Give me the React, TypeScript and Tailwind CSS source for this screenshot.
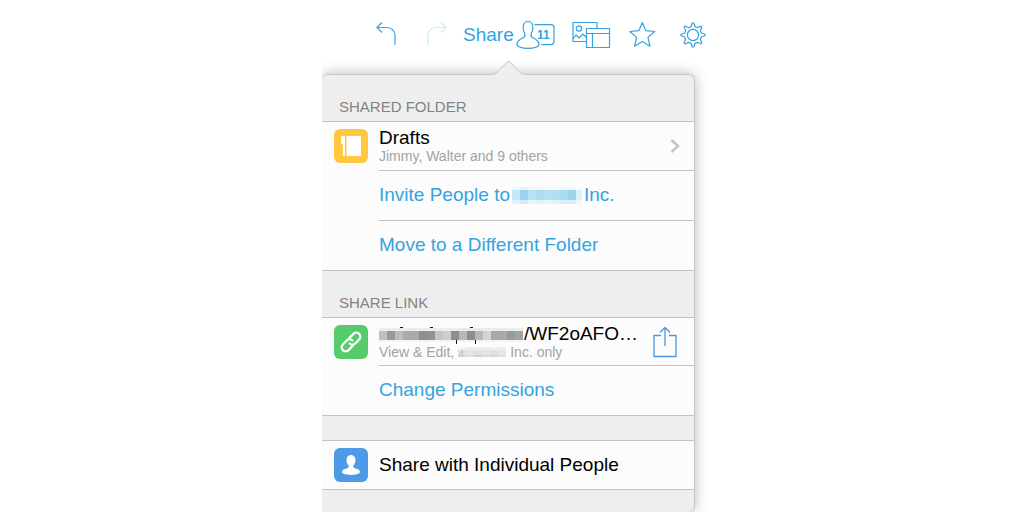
import type { ReactNode } from 'react';

type MosaicRow = { y: number; height: number; colors: string[] };

const inviteMosaic: MosaicRow[] = [
  { y: 0, height: 3, colors: ['#eef7fb', '#e6f4fb', '#f1f9fc', '#f1f9fc', '#f3fafd', '#f1f9fc', '#eef7fb', '#eaf6fb', '#f8fbfc'] },
  { y: 3, height: 10, colors: ['#c6e6f5', '#9ad3ee', '#b9e0f3', '#addcf1', '#b7e0f3', '#b4dff2', '#a9daf1', '#9ad3ee', '#dcf0f9'] },
  { y: 13, height: 4, colors: ['#e1f2fa', '#d3ecf8', '#e6f4fb', '#e4f3fa', '#e6f4fb', '#e1f2fa', '#d8eef8', '#d8eef8', '#eef7fb'] },
];

const linkMosaic: MosaicRow[] = [
  { y: 4, height: 3, colors: Array(18).fill('#ececec') },
  {
    y: 7,
    height: 9,
    colors: [
      '#c0c0c0', '#999999', '#bdbdbd', '#a9a9a9', '#a9a9a9', '#8e8e8e', '#929292', '#c4c4c4', '#cecece',
      '#8e8e8e', '#b8b8b8', '#8e8e8e', '#b8b8b8', '#d4d4d4', '#a7a7a7', '#a9a9a9', '#999999', '#a2a2a2',
    ],
  },
  { y: 16, height: 2, colors: Array(18).fill('#f4f4f4') },
];

const permissionMosaic: MosaicRow[] = [
  { y: 1, height: 3, colors: ['#f4f4f4', '#ededed', '#efefef', '#ebebeb', '#f0f0f0', '#ededed'] },
  { y: 4, height: 5, colors: ['#e2e2e2', '#e4e4e4', '#e0e0e0', '#e4e4e4', '#e0e0e0', '#e6e6e6'] },
  { y: 9, height: 2, colors: ['#d6d6d6', '#dedede', '#d2d2d2', '#dcdcdc', '#d6d6d6', '#dedede'] },
];

function Mosaic({ rows, width, height, children }: {
  rows: MosaicRow[];
  width: number;
  height: number;
  children?: ReactNode;
}) {
  return (
    <svg aria-hidden="true" className="shrink-0" width={width} height={height} shapeRendering="crispEdges">
      {rows.map(row =>
        row.colors.map((color, i) => (
          <rect key={`${row.y}-${i}`} x={i * 8} y={row.y} width="8" height={row.height} fill={color} />
        ))
      )}
      {children}
    </svg>
  );
}

function Toolbar() {
  return (
    <header className="flex h-[74px] items-start pt-[18px] pl-[53px] text-[#34a3e0]">
      <button aria-label="Undo" className="mr-[30px]">
        <svg width="22" height="34" viewBox="0 0 22 34" fill="none" stroke="currentColor" strokeWidth="1.2">
          <path d="M7 4.5 2 9.5l5 5M2 9.5h10a8 8 0 0 1 8 8V27" />
        </svg>
      </button>
      <button aria-label="Redo" disabled className="mr-[14px] text-[#cbe8f8]">
        <svg width="22" height="34" viewBox="0 0 22 34" fill="none" stroke="currentColor" strokeWidth="1.2">
          <path d="m14 4.5 5 5-5 5M19 9.5H9a8 8 0 0 0-8 8V27" />
        </svg>
      </button>
      <button className="flex h-[34px] items-center gap-[2px] text-[19px]">
        Share
        <svg width="40" height="34" viewBox="0 0 40 34" fill="none" stroke="currentColor" strokeWidth="1.2">
          <path d="M8.5 15C7 12.5 7 10.5 7.2 8.5 7.5 5.500 9.500 3.500 12 3.500s4.500 2 4.800 5c.2 2 .2 4-1.300 6.500-.7 1.500-.7 3.200.5 4.200 2.300 1.600 7 2.600 7 7.300 0 2-4.500 3.900-11 3.900S1 28.500 1 26.500c0-4.700 4.700-5.700 7-7.300 1.200-1 1.200-2.700.5-4.200z" />
          <path d="M18.500 6.600H35a3 3 0 0 1 3 3v14a3 3 0 0 1-3 3H25.500" />
          <text x="21" y="21" fontSize="12" fontWeight="bold" fill="currentColor" stroke="none">11</text>
        </svg>
      </button>
      <button aria-label="Insert" className="mr-[17px] ml-[16px]">
        <svg width="40" height="34" viewBox="0 0 40 34" fill="none" stroke="currentColor" strokeWidth="1.2">
          <path d="M14 23.500H1V4.500h24v6M14.500 10.500h23v19h-23zM14.500 15.500h23M20.500 15.500v14" />
          <circle cx="7" cy="10.500" r="2.700" />
          <path d="m1 21 3-4 3 3 4-4 3 3" />
        </svg>
      </button>
      <button aria-label="Favorite" className="mr-[24px]">
        <svg width="27" height="34" viewBox="0 0 27 34" fill="none" stroke="currentColor" strokeWidth="1.2" strokeLinejoin="round">
          <path d="m13.300 4.500 3.500 8.200 8.900.8-6.700 5.900 2 8.800-7.700-4.600-7.700 4.600 2-8.800-6.700-5.900 8.900-.8z" />
        </svg>
      </button>
      <button aria-label="Settings">
        <svg width="26" height="34" viewBox="0 0 26 34" fill="none" stroke="currentColor" strokeWidth="1.2" strokeLinejoin="round">
          <circle cx="13" cy="17" r="5.600" />
          <path d="M11 8.700 12.200 5h1.600L15 8.700a8.500 8.500 0 0 1 2.500 1l3.400-1.700 1.100 1.100-1.700 3.400a8.500 8.500 0 0 1 1 2.500l3.700 1.200v1.600L21.300 19a8.500 8.500 0 0 1-1 2.500l1.700 3.400-1.100 1.100-3.400-1.700a8.500 8.500 0 0 1-2.500 1L13.800 29h-1.600L11 25.300a8.500 8.500 0 0 1-2.500-1L5.100 26 4 24.900l1.700-3.400a8.500 8.500 0 0 1-1-2.500L1 17.800v-1.600L4.700 15a8.500 8.500 0 0 1 1-2.500L4 9.100 5.100 8l3.400 1.700a8.500 8.500 0 0 1 2.500-1z" />
        </svg>
      </button>
    </header>
  );
}

function SectionTitle({ children }: { children: ReactNode }) {
  return (
    <h2 className="flex h-[47px] items-end border-b border-[#c3c3c3] pb-[4px] pl-[17px] text-[15px] leading-[20px] text-[#838383]">
      {children}
    </h2>
  );
}

function App() {
  return (
    <div className="flex h-screen justify-center overflow-hidden bg-white font-['Liberation_Sans',Arial,sans-serif]">
      <main className="w-full max-w-[388px] pl-1">
        <Toolbar />

        <div className="mr-[11px] [clip-path:inset(-20px_-30px_0_0)]">
          <div className="relative rounded-[6px] border-t border-r border-[#c6c6c6] bg-[#eeeeee] shadow-[0_0_14px_rgba(0,0,0,0.28)]">
            {/* Caret under the Share button */}
            <svg className="absolute -top-[15px] left-[168px]" width="38" height="16" viewBox="0 0 38 16">
              <path d="M0 14.500c5 0 6-1 9-4L16.500 2.300Q18.500.5 20.500 2.300L28 10.500c3 3 4 4 9 4V16H0z" fill="#eeeeee" />
              <path d="M0 14.500c5 0 6-1 9-4L16.500 2.300Q18.500.5 20.500 2.300L28 10.500c3 3 4 4 9 4" fill="none" stroke="#c6c6c6" />
            </svg>

            <section>
              <SectionTitle>SHARED FOLDER</SectionTitle>
              <ul className="border-b border-[#c3c3c3] bg-[#fcfcfc]">
                <li>
                  <button className="flex w-full items-start pl-[12px] text-left">
                    <svg className="mt-[7px] mr-[11px] shrink-0" width="34" height="34" viewBox="0 0 34 34">
                      <rect width="34" height="34" rx="6" fill="#ffc840" />
                      <path d="M7 7h4v20H9V16l-2-2z" fill="#fff" />
                      <path d="M12.500 7H27v20H12.500z" fill="#fff" />
                    </svg>
                    <span className="flex h-[49px] flex-1 items-center border-b border-[#c3c3c3] pr-[14px]">
                      <span className="flex-1">
                        <span className="block text-[19px] leading-[20px] text-black">Drafts</span>
                        <span className="block text-[14px] leading-[16px] text-[#a3a3a3]">Jimmy, Walter and 9 others</span>
                      </span>
                      <svg width="10" height="14" viewBox="0 0 10 14" fill="none" stroke="#c4c4c4" strokeWidth="2.4">
                        <path d="m1.500 1 6.500 6-6.500 6" />
                      </svg>
                    </span>
                  </button>
                </li>
                <li className="pl-[57px]">
                  <button className="flex h-[50px] w-full items-center gap-[2px] border-b border-[#c3c3c3] text-[19px] text-[#34a3e0]">
                    Invite People to
                    <Mosaic rows={inviteMosaic} width={70} height={17} />
                    Inc.
                  </button>
                </li>
                <li className="pl-[57px]">
                  <button className="flex h-[49px] w-full items-center text-[19px] text-[#34a3e0]">
                    Move to a Different Folder
                  </button>
                </li>
              </ul>
            </section>

            <section>
              <SectionTitle>SHARE LINK</SectionTitle>
              <ul className="border-b border-[#c3c3c3] bg-[#fcfcfc]">
                <li className="flex items-start pl-[12px]">
                  <svg className="mt-[7px] mr-[11px] shrink-0" width="34" height="34" viewBox="0 0 34 34">
                    <rect width="34" height="34" rx="6" fill="#56cb6c" />
                    <g fill="none" stroke="#fff" strokeWidth="2.2" strokeLinecap="round" transform="rotate(-45 17 17)">
                      <path d="M15.500 21h-6a4 4 0 0 1 0-8H15a4 4 0 0 1 4 4" />
                      <path d="M18.500 13h6a4 4 0 0 1 0 8H19a4 4 0 0 1-4-4" />
                    </g>
                  </svg>
                  <div className="flex h-[48px] flex-1 items-center border-b border-[#c3c3c3] pr-[17px]">
                    <div className="flex-1">
                      <div className="flex items-center text-[19px] leading-[20px] text-black">
                        <Mosaic rows={linkMosaic} width={145} height={20}>
                          {/* Dots and tails that stick out of the blurred host name */}
                          <path d="M21 3h3v1h-3zM51 3h3v1h-3zM91 3h3v1h-3zM77 16h1v4h-1zM96 16h1v4h-1z" fill="#111" />
                        </Mosaic>
                        /WF2oAFO…
                      </div>
                      <div className="flex items-center gap-[4px] text-[14px] leading-[16px] text-[#a3a3a3]">
                        View &amp; Edit,
                        <Mosaic rows={permissionMosaic} width={48} height={12}>
                          <path d="M0 11h1V9h1V7h1V5h1V3h1v8h-1V7h-1v2h-1v2z" fill="#c8c8c8" />
                        </Mosaic>
                        Inc. only
                      </div>
                    </div>
                    <button aria-label="Share link">
                      <svg width="24" height="32" viewBox="0 0 24 32" fill="none" stroke="#4a97e0" strokeWidth="1.3">
                        <path d="M8 9.500H1v21h22v-21h-7M12 20V1.500M7 6.500l5-5 5 5" />
                      </svg>
                    </button>
                  </div>
                </li>
                <li className="pl-[57px]">
                  <button className="flex h-[49px] w-full items-center text-[19px] text-[#34a3e0]">
                    Change Permissions
                  </button>
                </li>
              </ul>
            </section>

            <section className="pt-[24px] pb-[22px]">
              <button className="flex h-[50px] w-full items-center border-y border-[#c3c3c3] bg-[#fcfcfc] pl-[12px] text-[19px] text-black">
                <svg className="mr-[11px] shrink-0" width="34" height="34" viewBox="0 0 34 34">
                  <rect width="34" height="34" rx="6" fill="#4c9ae8" />
                  <path d="M14.500 17.500c-2-2.500-2.200-5-1.800-7 .5-2.300 2.200-3.500 4.300-3.500s3.800 1.200 4.300 3.500c.4 2 .2 4.500-1.800 7-.6 1.300-.2 2.100.8 2.600 2.200 1 5.700 1.300 5.700 4 0 1.700-4 2.900-9 2.900s-9-1.200-9-2.900c0-2.700 3.500-3 5.700-4 1-.5 1.400-1.300.8-2.600z" fill="#fff" />
                </svg>
                Share with Individual People
              </button>
            </section>
          </div>
        </div>
      </main>
    </div>
  );
}

export default App;
